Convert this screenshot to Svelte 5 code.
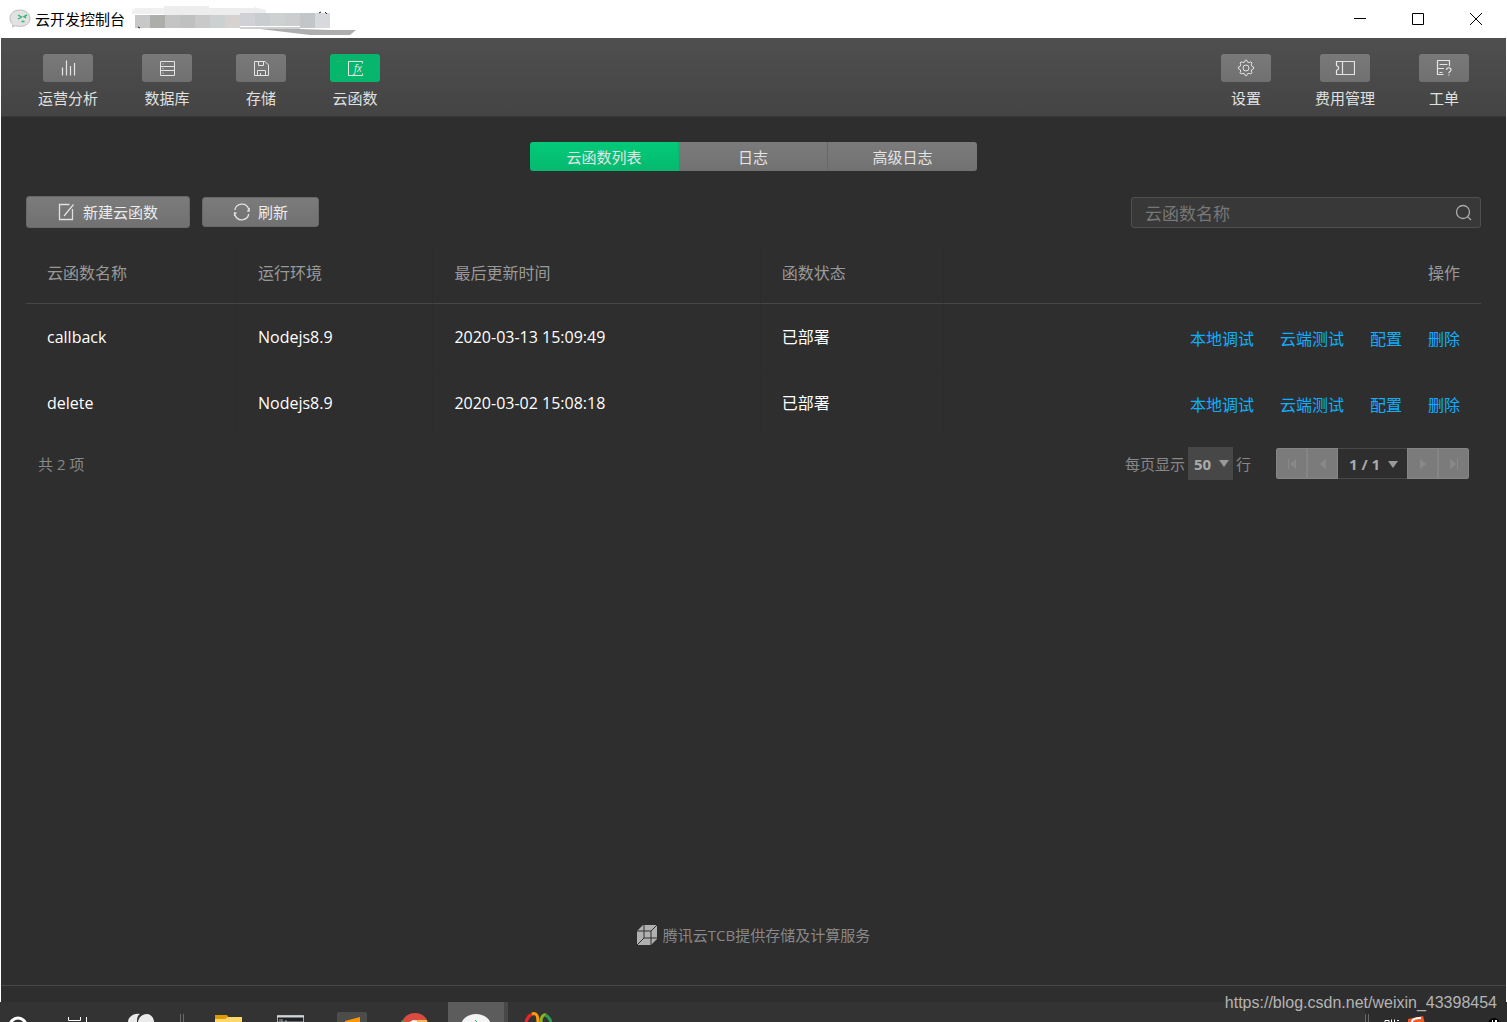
<script>
  let tab = 0;
  let keyword = "";
  let pageSize = "50";
  let page = "1 / 1";

  const tabs = ["云函数列表", "日志", "高级日志"];
  const leftNav = [
    { icon: "chart", label: "运营分析" },
    { icon: "db", label: "数据库" },
    { icon: "disk", label: "存储" },
    { icon: "fx", label: "云函数", active: true }
  ];
  const rightNav = [
    { icon: "gear", label: "设置" },
    { icon: "ticket", label: "费用管理" },
    { icon: "order", label: "工单" }
  ];
  const functions = [
    { name: "callback", env: "Nodejs8.9", time: "2020-03-13 15:09:49", status: "已部署" },
    { name: "delete", env: "Nodejs8.9", time: "2020-03-02 15:08:18", status: "已部署" }
  ];
  const actions = ["本地调试", "云端测试", "配置", "删除"];

  // covered part of the window title
  const mosaic = ["#c8c8c8", "#acaeaa", "#c4c4c5", "#bfc0c0", "#c9c9c9", "#cbd0d0", "#d5d2cf", "#cfd1d6", "#c9cdd0", "#cdd1d2", "#cccdcf", "#c3c6c9", "#d8d9dd"];

  $: filtered = functions.filter((f) => f.name.includes(keyword));
</script>

<div class="window">
  <div class="titlebar">
    <svg class="app-icon" width="22" height="20" viewBox="0 0 22 20">
      <path d="M11 1C5 1 1 4.500 1 9.500c0 2.500 1 4.500 3 6L3.500 18l3-1.300c1.500.5 3 .6 4.500.6 6 0 10-3.300 10-7.800S17 1 11 1z" fill="#e2e2e2" stroke="#bcbcbc" />
      <path d="M9 6l3.500 2L9 10M18 6l-3 1.500 2 1.500M12.500 12.500h3" fill="none" stroke="#2fb677" stroke-width="1.400" />
    </svg>
    <span class="title">云开发控制台</span>
    <svg class="mosaic" width="226" height="32" viewBox="0 0 226 32">
      <path d="M0 7l3-2h29v6H0z" fill="#f0f0f0" />
      <path d="M32 3h45v10H32zM77 5h45v8H77zM122 4l12 3v6h-12z" fill="#ededed" />
      {#each mosaic as color, i}
        <rect x={3 + i * 15} y={i > 6 ? 10 : 12} width="15" height={i > 10 ? 15 : 13} fill={color} />
      {/each}
      <path d="M108 24h60v2h-60z" fill="#d0d0d0" />
      <path d="M128 26h40l30 1h26l-6 5h-40z" fill="#aeaeae" />
      <path d="M187 10l2-1M193 9l2 2M6 24l2 1" stroke="#222" />
    </svg>
    <div class="window-buttons">
      <button aria-label="最小化"><svg width="14" height="14"><path d="M1 6.500h12" stroke="#000" /></svg></button>
      <button aria-label="最大化"><svg width="14" height="14"><path d="M1.500 1.500h11v11h-11z" fill="none" stroke="#000" /></svg></button>
      <button aria-label="关闭"><svg width="14" height="14"><path d="M1 1l12 12M13 1L1 13" stroke="#000" /></svg></button>
    </div>
  </div>

  <div class="app">
    <header>
      {#each [leftNav, rightNav] as group}
        <nav>
          {#each group as item}
            <button class="nav-item" class:active={item.active}>
              <span class="nav-icon">
                <svg width="20" height="20" viewBox="0 0 20 20">
                  {#if item.icon === "chart"}
                    <path d="M4.500 9.500v8M8.500 2.500v15M12.500 8v9.500M16.500 5v12.500" stroke-width="1.200" />
                  {:else if item.icon === "db"}
                    <path d="M3.500 3.500h14v14h-14zM3.500 8.500h14M3.500 12.500h14M5.500 6h1M5.500 10.500h1M5.500 15h1" />
                  {:else if item.icon === "disk"}
                    <path d="M3.500 3.500h10.500l3.500 3.500v10.500h-14zM7.500 3.500v4h5v-4M6.500 17.500v-5h8v5M9.500 15v2.500" />
                  {:else if item.icon === "fx"}
                    <path d="M17.500 3.500h-14v14h14v-2M17.500 3.500v2" />
                    <text x="9" y="14">fx</text>
                  {:else if item.icon === "gear"}
                    <path d="M8.600 4l.6-1.800h1.600l.6 1.800 1.600.6 1.800-.8 1.200 1.200-.8 1.800.6 1.500 1.800.7v1.800l-1.800.7-.6 1.500.8 1.800-1.200 1.200-1.800-.8-1.600.6-.6 1.800H9.200l-.6-1.800-1.600-.6-1.800.8L4 14.800l.8-1.800-.6-1.500-1.800-.7V9l1.800-.7.6-1.500L4 5l1.200-1.200 1.800.8z" />
                    <circle cx="10" cy="10" r="3" />
                  {:else if item.icon === "ticket"}
                    <path d="M1.500 3.500h18v13h-18v-4l2-1.500v-2l-2-1.500zM7.500 3.500v13" stroke-width="1.200" />
                  {:else}
                    <path d="M15.500 8V2.500h-12v14h6M5.500 6.500h8M4 10.500h6M5.500 14.500h3M12.500 12c0-3.500 5-2.500 4.500 0 0 1.500-2.200 1.500-2.200 3.200M14.800 16.500v1" stroke-width="1.200" />
                  {/if}
                </svg>
              </span>
              <span>{item.label}</span>
            </button>
          {/each}
        </nav>
      {/each}
    </header>

    <main>
      <div class="tabs">
        {#each tabs as name, i}
          <button class:selected={tab === i} on:click={() => (tab = i)}>{name}</button>
        {/each}
      </div>

      <div class="toolbar">
        <button class="create">
          <svg width="18" height="18" viewBox="0 0 18 18"><path d="M11.500 1.500h-10v15h13V6M15.500 1.500L6 13" /></svg>
          新建云函数
        </button>
        <button class="refresh">
          <svg width="18" height="18" viewBox="0 0 18 18"><path d="M1.800 7a7.200 7.200 0 0 1 14-.5l.2 1.500M16.200 5v3h-2M15.800 11a7.200 7.200 0 0 1-14 .5L1.600 10M1.500 13v-3h2" /></svg>
          刷新
        </button>
        <label class="search">
          <input type="text" placeholder="云函数名称" aria-label="云函数名称" bind:value={keyword} />
          <svg width="18" height="18" viewBox="0 0 18 18"><circle cx="8" cy="8" r="6.500" /><path d="M12.500 12.500L16 16" /></svg>
        </label>
      </div>

      <table>
        <thead>
          <tr>
            <th class="name">云函数名称</th>
            <th class="env">运行环境</th>
            <th class="time">最后更新时间</th>
            <th class="status">函数状态</th>
            <th class="ops">操作</th>
          </tr>
        </thead>
        <tbody>
          {#each filtered as fn}
            <tr>
              <td>{fn.name}</td>
              <td>{fn.env}</td>
              <td>{fn.time}</td>
              <td>{fn.status}</td>
              <td class="ops">
                <div class="links">
                  {#each actions as action}
                    <a href="#{fn.name}">{action}</a>
                  {/each}
                </div>
              </td>
            </tr>
          {/each}
        </tbody>
      </table>

      <div class="paging">
        <span>共 {filtered.length} 项</span>
        <div class="paging-right">
          <label for="page-size">每页显示</label>
          <div class="select size">
            <select id="page-size" bind:value={pageSize}>
              <option>50</option>
              <option>100</option>
            </select>
            <i></i>
          </div>
          <span>行</span>
          <div class="pager">
            <button disabled aria-label="首页"><svg width="12" height="12"><path d="M2 1h1v10H2zM10 1v10L4 6z" /></svg></button>
            <button disabled aria-label="上一页"><svg width="12" height="12"><path d="M9 1v10L3 6z" /></svg></button>
            <div class="select">
              <select aria-label="页码" bind:value={page}>
                <option>1 / 1</option>
              </select>
              <i></i>
            </div>
            <button disabled aria-label="下一页"><svg width="12" height="12"><path d="M3 1v10l6-5z" /></svg></button>
            <button disabled aria-label="末页"><svg width="12" height="12"><path d="M2 1v10l6-5zM9 1h1v10H9z" /></svg></button>
          </div>
        </div>
      </div>

      <div class="provider">
        <svg width="20" height="20" viewBox="0 0 20 20">
          <path d="M6 0h14v14l-6 6H0V6z" fill="#b0b0b0" />
          <path d="M0 6h14v14M14 6l6-6M7 0v13h13M0 20l7-7" fill="none" stroke="#2e2e2e" />
        </svg>
        腾讯云TCB提供存储及计算服务
      </div>
    </main>
    <div class="bottom-strip"></div>
  </div>

  <div class="taskbar">
    <div class="slot search-slot">
      <svg width="20" height="20"><circle cx="10" cy="24" r="8" fill="none" stroke="#fff" stroke-width="3" /></svg>
    </div>
    <div class="slot view-slot">
      <svg width="20" height="20"><path d="M1.500 15v3.500h12V15M19.500 15v5" fill="none" stroke="#fff" /></svg>
    </div>
    <div class="slot copilot-slot">
      <svg width="26" height="20"><path d="M0 20c0-6 7-9 12-8-3 2-3 5-3 8zM10 20c1-6 5-8 9-8s7 4 7 8z" fill="#eaeaea" /></svg>
    </div>
    <div class="slot split-slot">
      <svg width="4" height="20"><path d="M.5 12v8M3.500 12v8" stroke="#686868" /></svg>
    </div>
    <div class="slot app-slot">
      <svg width="28" height="20"><path d="M1 13h12l2 3v4H1z" fill="#dc9a08" /><path d="M14 15h14v5H1v-3h10z" fill="#ffd766" /></svg>
    </div>
    <div class="slot app-slot">
      <svg width="28" height="20"><path d="M1.500 13.500h26V20h-26z" fill="#202224" stroke="#a6abad" /><path d="M1 14.500h27" stroke="#cdd5d8" stroke-width="2" /><path d="M3 18h2M6 17v3M9 19h2" stroke="#aaa" /></svg>
    </div>
    <div class="slot app-slot">
      <svg width="30" height="20"><rect width="30" height="16" y="10" rx="2" fill="#4c4c4c" /><path d="M8 19l15-4v5H8z" fill="#ff9800" /></svg>
    </div>
    <div class="slot app-slot">
      <svg width="28" height="20"><circle cx="15" cy="25" r="14" fill="#dc4b40" /><path d="M1 20l1-2 3 2z" fill="#34a853" /><path d="M10 20c2-2 5-2 8-2h9v2z" fill="#f4b860" /><path d="M10 20c2-2 5-2 7-1v1z" fill="#fff" /></svg>
    </div>
    <div class="slot app-slot current">
      <svg width="28" height="20"><ellipse cx="14" cy="24" rx="15" ry="12" fill="#f4f4f4" /><path d="M13 18l2 2" stroke="#2fb677" /></svg>
    </div>
    <div class="slot app-slot">
      <svg width="28" height="20" fill="none" stroke-width="3"><path d="M2 20c1-4 4-7 7-8" stroke="#e8262c" /><path d="M8 12c5-2 6 3 6 8" stroke="#ff9d0a" /><path d="M17 20c0-6 3-8 5-7" stroke="#8bb727" /><path d="M21 13c3 1 5 4 6 7" stroke="#29a04b" /></svg>
    </div>
    <div class="tray">
      <svg width="142" height="20">
        <path d="M.5 12v8M3.500 12v8" stroke="#686868" />
        <path d="M24 18.500h-4v2M24 18.500v2M26.500 20v-2.500M29.500 20v-2.500M32 18.500h2" fill="none" stroke="#fff" />
        <path d="M43 17l15-3 2 8H43z" fill="#f05a28" />
        <path d="M47 20c0-3 4-4 9-4" fill="none" stroke="#fff" stroke-width="2" />
        <circle cx="129" cy="22" r="6" fill="#000" /><path d="M127 19h1M130 19h2" stroke="#fff" stroke-width="2" />
      </svg>
    </div>
  </div>

  <div class="watermark">https://blog.csdn.net/weixin_43398454</div>
</div>

<style>
  :global(body) {
    margin: 0;
    background: #fff;
  }
  .window {
    position: relative;
    min-height: 100vh;
    display: flex;
    flex-direction: column;
    font-family: "Open Sans", "Noto Sans CJK SC", sans-serif;
    font-size: 15px;
    line-height: 20px;
  }
  button,
  input,
  select {
    font: inherit;
    color: inherit;
    margin: 0;
    padding: 0;
    border: 0;
    background: none;
  }
  svg {
    display: block;
    flex: none;
  }
  .titlebar {
    display: flex;
    align-items: center;
    height: 38px;
    padding-left: 9px;
    color: #000;
  }
  .title {
    margin-left: 4px;
  }
  .mosaic {
    margin-left: 7px;
  }
  .window-buttons {
    display: flex;
    margin-left: auto;
    padding-right: 2px;
  }
  .window-buttons button {
    display: flex;
    justify-content: center;
    align-items: center;
    width: 58px;
    height: 38px;
  }
  .app {
    flex: 1;
    display: flex;
    flex-direction: column;
    margin: 0 1px;
    background: #2e2e2e;
  }
  header {
    display: flex;
    justify-content: space-between;
    padding: 16px 37px 8px;
    border-bottom: 1px solid #383838;
    background: linear-gradient(#4f4f4f, #444);
  }
  nav {
    display: flex;
    gap: 44px;
  }
  .nav-item {
    display: flex;
    flex-direction: column;
    align-items: center;
    gap: 6px;
    color: #e0e0e0;
  }
  .nav-icon {
    display: flex;
    justify-content: center;
    align-items: center;
    width: 50px;
    height: 28px;
    border-radius: 3px;
    background: linear-gradient(#797979, #707070);
  }
  .nav-icon svg {
    fill: none;
    stroke: #e4e4e4;
  }
  .nav-icon text {
    font: italic 10px "Open Sans", sans-serif;
    fill: #e4e4e4;
    stroke: none;
  }
  .active .nav-icon {
    background: #05b66c;
  }
  main {
    flex: 1;
    display: flex;
    flex-direction: column;
    padding: 25px 25px 40px;
  }
  .tabs {
    display: flex;
    align-self: center;
    border-radius: 3px;
    overflow: hidden;
  }
  .tabs button {
    width: 149px;
    height: 29px;
    color: #e4e4e4;
    background: linear-gradient(#7b7b7b, #717171);
    border-right: 1px solid #686868;
  }
  .tabs button:last-child {
    border-right: 0;
  }
  .tabs button.selected {
    background: linear-gradient(#03ca79, #06b96f);
    border-color: #06b96f;
  }
  .toolbar {
    display: flex;
    align-items: center;
    height: 32px;
    margin-top: 25px;
  }
  .toolbar button {
    display: flex;
    justify-content: center;
    align-items: center;
    gap: 7px;
    box-sizing: border-box;
    border: 1px solid #686868;
    border-radius: 3px;
    color: #ececec;
    background: linear-gradient(#7b7b7b, #717171);
  }
  .toolbar svg {
    fill: none;
    stroke: #e0e0e0;
    stroke-width: 1.3;
  }
  .toolbar .create {
    width: 164px;
    height: 32px;
  }
  .toolbar .refresh {
    width: 117px;
    height: 30px;
    margin-left: 12px;
  }
  .search {
    display: flex;
    align-items: center;
    box-sizing: border-box;
    width: 350px;
    height: 31px;
    margin-left: auto;
    padding: 1px 7px 0 13px;
    border: 1px solid #505050;
    border-radius: 3px;
    background: #383838;
  }
  .search input {
    flex: 1;
    min-width: 0;
    padding-top: 2px;
    font-size: 17px;
    color: #ddd;
    outline: none;
  }
  .search input::placeholder {
    color: #777;
  }
  .search svg {
    stroke: #aaa;
  }
  table {
    width: 100%;
    margin-top: 15px;
    border-spacing: 0;
    table-layout: fixed;
    font-size: 16px;
  }
  th,
  td {
    box-sizing: border-box;
    height: 66px;
    padding: 0 21px;
    text-align: left;
    border-right: 1px solid #2c2c2c;
    border-bottom: 1px solid #2c2c2c;
    color: #fff;
  }
  th {
    height: 61px;
    font-weight: normal;
    color: #999;
    border-bottom-color: #474747;
  }
  .name {
    width: 14.5%;
  }
  .env {
    width: 13.5%;
  }
  .time {
    width: 22.5%;
  }
  .status {
    width: 12.6%;
  }
  .ops {
    text-align: right;
    border-right: 0;
  }
  .links {
    display: flex;
    justify-content: flex-end;
    gap: 26px;
    padding-top: 4px;
  }
  .links a {
    color: #10aeff;
    text-decoration: none;
  }
  .paging {
    display: flex;
    justify-content: space-between;
    align-items: center;
    padding: 11px 12px 0;
    color: #888;
  }
  .paging-right {
    display: flex;
    align-items: center;
    gap: 3px;
  }
  .select {
    position: relative;
    box-sizing: border-box;
    width: 69px;
    height: 31px;
    border: solid #484848;
    border-width: 1px 0;
  }
  .select.size {
    width: 45px;
    height: 33px;
    border: 0;
    background: #474747;
  }
  select {
    appearance: none;
    width: 100%;
    height: 100%;
    padding-left: 11px;
    font-weight: bold;
    color: #aaa;
    outline: none;
  }
  .size select {
    padding-left: 6px;
  }
  /* drop-down arrow over the select */
  .select i {
    position: absolute;
    right: 9px;
    top: 12px;
    border: 5px solid transparent;
    border-top: 7px solid #999;
    border-bottom: 0;
    pointer-events: none;
  }
  .select.size i {
    right: 4px;
    top: 13px;
  }
  .pager {
    display: flex;
    margin-left: 22px;
    border-radius: 3px;
    overflow: hidden;
  }
  .pager button {
    display: flex;
    justify-content: center;
    align-items: center;
    box-sizing: border-box;
    width: 31px;
    height: 31px;
    border: 1px solid #858585;
    background: #7b7b7b;
  }
  .pager svg {
    fill: #898989;
  }
  .provider {
    display: flex;
    justify-content: center;
    align-items: center;
    gap: 6px;
    margin-top: auto;
    color: #888;
  }
  .bottom-strip {
    height: 16px;
    border-top: 1px solid #474747;
  }
  .taskbar {
    display: flex;
    height: 20px;
    overflow: hidden;
    background: #333;
  }
  .slot {
    display: flex;
    justify-content: center;
    flex: none;
  }
  .search-slot,
  .split-slot {
    width: 36px;
  }
  .view-slot {
    width: 82px;
  }
  .copilot-slot {
    width: 46px;
  }
  .app-slot {
    width: 56px;
    margin-right: 6px;
  }
  .current {
    background: #5c5c5c;
    box-shadow: 4px 0 #484848;
  }
  .tray {
    margin-left: auto;
    background: #2c2c2c;
  }
  .watermark {
    position: absolute;
    right: 10px;
    bottom: 10px;
    font-family: "Liberation Sans", sans-serif;
    font-size: 16px;
    line-height: 18px;
    color: #b4b4b4;
  }
</style>
